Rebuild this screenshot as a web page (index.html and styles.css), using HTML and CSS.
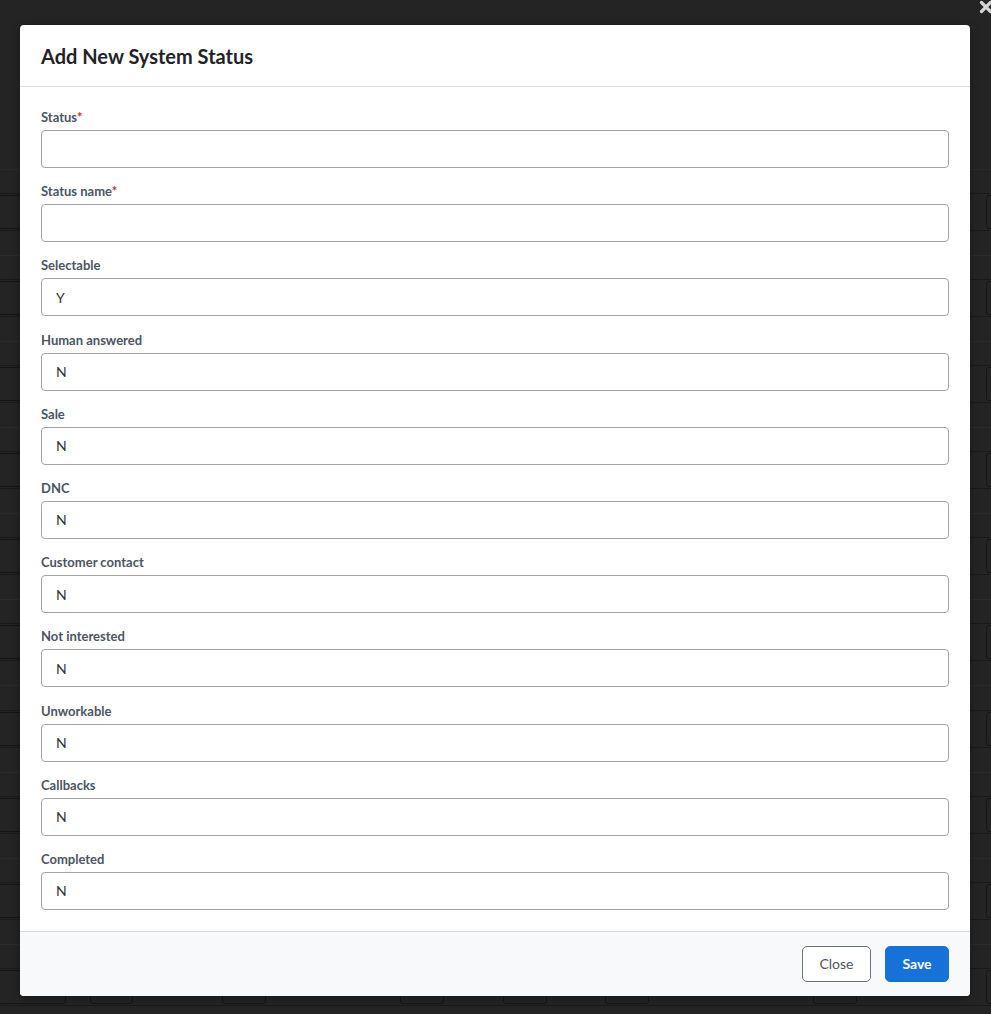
FILE: index.html
```html
<!DOCTYPE html>
<html lang="en">
<head>
<meta charset="utf-8">
<title>Add New System Status</title>
<link rel="stylesheet" href="styles.css">
</head>
<body>
<div class="page">
  <div class="page-top"></div>
  <div class="rows">
    <div class="row"><span class="box b1"></span><span class="box b2"></span><span class="box b3"></span><span class="box b4"></span><span class="box b5"></span><span class="box b6"></span><span class="box b7"></span><span class="box b8"></span></div>
    <div class="row"><span class="box b1"></span><span class="box b2"></span><span class="box b3"></span><span class="box b4"></span><span class="box b5"></span><span class="box b6"></span><span class="box b7"></span><span class="box b8"></span></div>
    <div class="row"><span class="box b1"></span><span class="box b2"></span><span class="box b3"></span><span class="box b4"></span><span class="box b5"></span><span class="box b6"></span><span class="box b7"></span><span class="box b8"></span></div>
    <div class="row"><span class="box b1"></span><span class="box b2"></span><span class="box b3"></span><span class="box b4"></span><span class="box b5"></span><span class="box b6"></span><span class="box b7"></span><span class="box b8"></span></div>
    <div class="row"><span class="box b1"></span><span class="box b2"></span><span class="box b3"></span><span class="box b4"></span><span class="box b5"></span><span class="box b6"></span><span class="box b7"></span><span class="box b8"></span></div>
    <div class="row"><span class="box b1"></span><span class="box b2"></span><span class="box b3"></span><span class="box b4"></span><span class="box b5"></span><span class="box b6"></span><span class="box b7"></span><span class="box b8"></span></div>
    <div class="row"><span class="box b1"></span><span class="box b2"></span><span class="box b3"></span><span class="box b4"></span><span class="box b5"></span><span class="box b6"></span><span class="box b7"></span><span class="box b8"></span></div>
    <div class="row"><span class="box b1"></span><span class="box b2"></span><span class="box b3"></span><span class="box b4"></span><span class="box b5"></span><span class="box b6"></span><span class="box b7"></span><span class="box b8"></span></div>
    <div class="row"><span class="box b1"></span><span class="box b2"></span><span class="box b3"></span><span class="box b4"></span><span class="box b5"></span><span class="box b6"></span><span class="box b7"></span><span class="box b8"></span></div>
    <div class="row"><span class="box b1"></span><span class="box b2"></span><span class="box b3"></span><span class="box b4"></span><span class="box b5"></span><span class="box b6"></span><span class="box b7"></span><span class="box b8"></span></div>
  </div>
</div>

<button class="overlay-close" type="button" aria-label="Close">
  <svg width="14" height="14" viewBox="0 0 14 14"><path d="M2.5 2.5 L11.5 11.5 M11.5 2.5 L2.5 11.5" stroke="#d4d4d4" stroke-width="3.2" stroke-linecap="round"/></svg>
</button>

<div class="modal">
  <div class="modal-header">
    <h1 class="modal-title">Add New System Status</h1>
  </div>
  <div class="modal-body">
    <div class="field"><label class="field-label">Status<span class="req">*</span></label><input class="field-input" type="text" value=""></div>
    <div class="field"><label class="field-label">Status name<span class="req">*</span></label><input class="field-input" type="text" value=""></div>
    <div class="field"><label class="field-label">Selectable</label><input class="field-input" type="text" value="Y"></div>
    <div class="field"><label class="field-label">Human answered</label><input class="field-input" type="text" value="N"></div>
    <div class="field"><label class="field-label">Sale</label><input class="field-input" type="text" value="N"></div>
    <div class="field"><label class="field-label">DNC</label><input class="field-input" type="text" value="N"></div>
    <div class="field"><label class="field-label">Customer contact</label><input class="field-input" type="text" value="N"></div>
    <div class="field"><label class="field-label">Not interested</label><input class="field-input" type="text" value="N"></div>
    <div class="field"><label class="field-label">Unworkable</label><input class="field-input" type="text" value="N"></div>
    <div class="field"><label class="field-label">Callbacks</label><input class="field-input" type="text" value="N"></div>
    <div class="field"><label class="field-label">Completed</label><input class="field-input" type="text" value="N"></div>
  </div>
  <div class="modal-footer">
    <button class="btn btn-close" type="button">Close</button>
    <button class="btn btn-save" type="button">Save</button>
  </div>
</div>
</body>
</html>
```

FILE: styles.css
```css
* { box-sizing: border-box; }

html, body {
  margin: 0;
  padding: 0;
  background: #242424;
  font-family: Lato, "Liberation Sans", sans-serif;
  overflow: hidden;
}

body {
  width: 991px;
  height: 1014px;
  position: relative;
}

/* Background page (behind the overlay) */
.page {
  width: 991px;
}

.page-top {
  height: 193px;
  background:
    linear-gradient(#2a2a2a, #2a2a2a) 0 169px / 100% 1px no-repeat;
}

.row {
  position: relative;
  height: 86.1px;
  border-top: 1px solid #1a1a1a;
  background:
    linear-gradient(#1a1a1a, #1a1a1a) 0 36px / 100% 1px no-repeat,
    linear-gradient(#2b2b2b, #2b2b2b) 0 61px / 100% 1px no-repeat;
}

.box {
  position: absolute;
  top: 1px;
  height: 34px;
  border: 1px solid #151515;
  border-radius: 3px;
}
.b1 { left: -10px; width: 76px; }
.b2 { left: 90px; width: 43px; }
.b3 { left: 222px; width: 44px; }
.b4 { left: 400px; width: 44px; }
.b5 { left: 503px; width: 44px; }
.b6 { left: 605px; width: 44px; }
.b7 { left: 813px; width: 44px; }
.b8 { left: 986px; width: 44px; }

/* Overlay close X */
.overlay-close {
  position: absolute;
  top: 0;
  left: 979px;
  width: 14px;
  height: 14px;
  padding: 0;
  border: 0;
  background: none;
  display: flex;
}

/* Modal */
.modal {
  position: absolute;
  top: 25px;
  left: 20px;
  width: 950px;
  background: #ffffff;
  border-radius: 4px;
  overflow: hidden;
  box-shadow: 0 2px 8px rgba(0, 0, 0, 0.35);
}

.modal-header {
  padding: 16px 21px 15px;
  border-bottom: 1px solid #dedede;
}

.modal-title {
  margin: 0;
  font-size: 20px;
  line-height: 30px;
  font-weight: 700;
  color: #1f2328;
}

.modal-body {
  padding: 21px 21px 21px;
  display: flex;
  flex-direction: column;
  gap: 14.2px;
}

.field {
  display: flex;
  flex-direction: column;
}

.field-label {
  font-size: 13px;
  line-height: 18px;
  font-weight: 700;
  color: #4b5563;
  margin-bottom: 4px;
}

.req {
  color: #e0282e;
}

.field-input {
  height: 38px;
  width: 100%;
  border: 1px solid #a3a3a3;
  border-radius: 4px;
  padding: 0 14px;
  font-family: Lato, "Liberation Sans", sans-serif;
  font-size: 14px;
  color: #333333;
  background: #ffffff;
  outline: none;
}

.modal-footer {
  display: flex;
  justify-content: flex-end;
  gap: 14px;
  padding: 14px 21px;
  background: #f8f9fb;
  border-top: 1px solid #dcdcdc;
}

.btn {
  height: 36px;
  border-radius: 5px;
  font-family: Lato, "Liberation Sans", sans-serif;
  font-size: 14px;
  padding: 0 16px;
  cursor: pointer;
}

.btn-close {
  width: 69px;
  background: #ffffff;
  border: 1px solid #6b7280;
  color: #4b5563;
  font-weight: 400;
}

.btn-save {
  width: 64px;
  background: #1672d8;
  border: 1px solid #1672d8;
  color: #ffffff;
  font-weight: 700;
}
```
